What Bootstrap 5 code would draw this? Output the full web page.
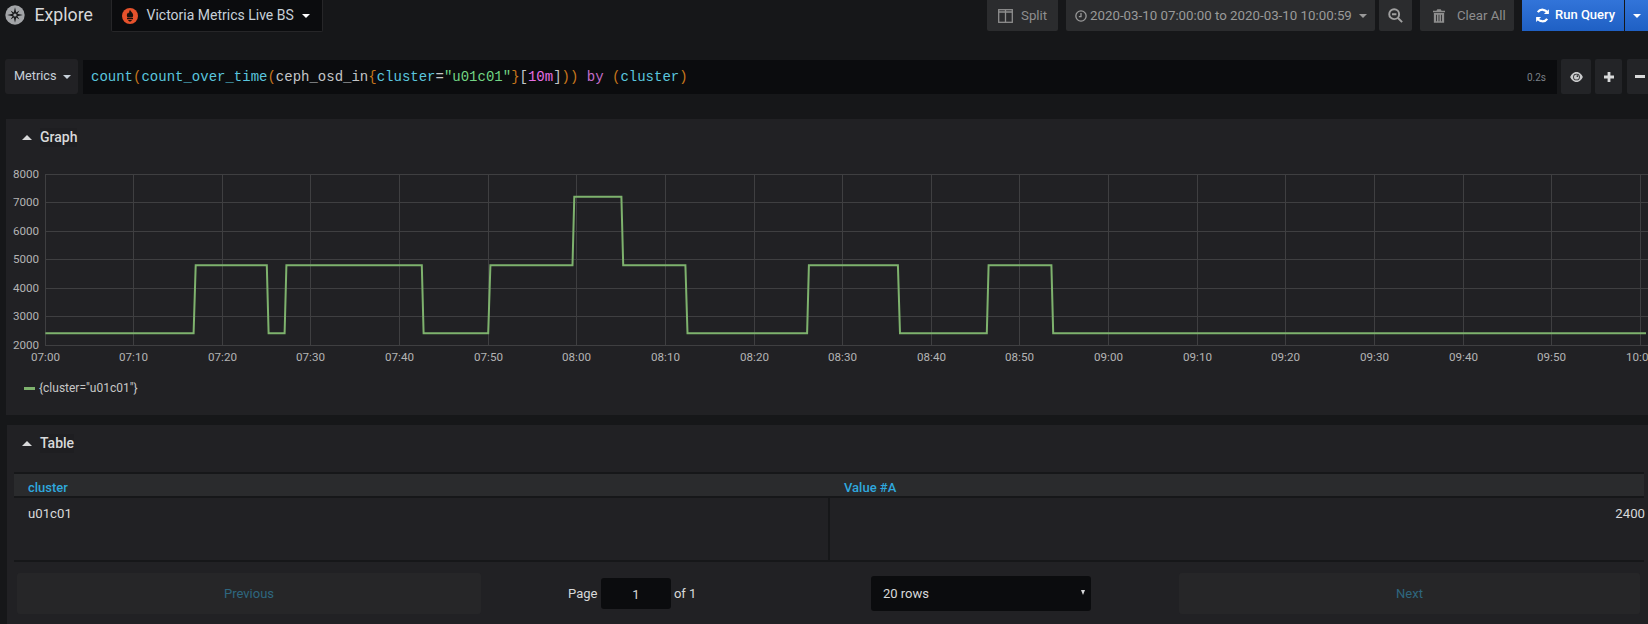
<!DOCTYPE html>
<html lang="en">
<head>
<meta charset="utf-8">
<title>Explore</title>
<link rel="stylesheet" href="https://cdn.jsdelivr.net/npm/bootstrap@5.3.0/dist/css/bootstrap.min.css">
<script src="https://cdn.jsdelivr.net/npm/bootstrap@5.3.0/dist/js/bootstrap.bundle.min.js"></script>
<style>
html,body{height:624px;overflow:hidden}
body{background:#161719;color:#d8d9da;font:13px/1.3 Roboto,sans-serif}
.topbar{height:31px;padding-left:5px}
.gf-logo{margin-bottom:1px;flex:none}
.crumb{font-size:17.700px;margin:0 0 1px 9.500px;color:#d8d9da;width:76px}
.ds-pick{width:212px;height:32px;background:#0b0c0e;border:1px solid #262628;border-top:0;border-radius:0 0 2px 2px;color:#c7d0d9;padding:0 12px 0 10px}
.ds-name{margin-left:9px;font-size:14px}
.tbtn{height:31px;background:#2b2c2e;border-radius:0 0 2px 2px;color:#8e8e8e;flex:none}
.w-split{width:71px;margin-left:auto;margin-right:8px;padding-left:11px;gap:8px;font-size:13.300px}
.w-time{width:309px;margin-right:4px;color:#9a9a9a;font-size:13.300px;padding-left:9px;gap:3px}
.w-zoom{width:33px;margin-right:8px}
.w-clear{width:94px;margin-right:8px;padding-left:13px;gap:12px;font-size:13.200px}
.runbtn{width:102px;height:31px;background:linear-gradient(180deg,#3274d9,#1f60c4);color:#fff;font-weight:500;font-size:13px;padding-left:13px;gap:5px}
.runcaret{width:23px;margin-left:1px;height:31px;background:linear-gradient(180deg,#3274d9,#1f60c4)}
.careta{width:0;height:0;border-left:4px solid transparent;border-right:4px solid transparent;border-top:4.500px solid currentColor}
.carup{width:0;height:0;border-left:5.500px solid transparent;border-right:5.500px solid transparent;border-bottom:5px solid #d8d9da}
.qrow{margin-top:28px;height:35px;padding-left:5px}
.metbtn{width:73px;background:#212124;border-radius:3px;color:#c7d0d9;margin-right:5px;flex:none;padding-left:9px;gap:6px;font-size:12.700px}
.qbox{width:1474px;height:34px;margin-top:1px;background:#0b0c0e;padding:0 11px 0 8px;flex:none;font:14px "Liberation Mono",monospace}
.qbox .ms{font:10px Roboto,sans-serif;color:#7b8087;margin-left:auto}
.c-fn{color:#5ac6de}.c-p{color:#c7761c}.c-w{color:#c4c6c8}.c-s{color:#72d484}.c-k{color:#e66fe4}.c-by{color:#c56cc8}
.sqbtn{height:35px;background:#232427;border-radius:2px;flex:none;color:#d8d9da}
.w-eye{width:30px;margin-left:4px}.w-plus{width:27px;margin-left:4px}.w-minus{width:26px;margin-left:5px;margin-right:-5px}
.pane{background:#212124;margin-left:6px}
.pane-graph{margin-top:25px;height:296px}
.pane-table{margin-top:10px;height:199px;margin-left:7px}
.phead{height:30px;padding:7px 0 0 16px}
.phead.tb{padding:7px 0 0 15px}
.ptitle{margin-left:8px;font-size:14px;font-weight:500;color:#d8d9da;background:#1e1e21}
.chart{display:block;position:absolute;left:0;top:0}
.chartwrap{position:relative;height:296px;margin-top:-30px}
.chart text{font:11.600px Roboto,sans-serif;fill:#b4b4b4}
.lg{position:absolute;left:18px;top:262px;font-size:12px;color:#c7c7c7;display:flex;align-items:center}
.lgbar{width:11px;height:3px;background:#7eb26d;margin-right:4px}
.tbl{margin:17px 0 0 7px;width:1630px;border-top:2px solid #161719;border-bottom:2px solid #161719}
.tr-h{height:24px;background:#2a2b2d;border-bottom:2px solid #161719;color:#2fa8de;font-size:13px;font-weight:500}
.tc-a{width:815px;padding:6px 0 0 14px;flex:none}
.tc-b{padding:6px 0 0 15px}
.tr-b{height:62px;color:#d8d9da;font-size:13.200px}
.tr-b .tc-a{border-right:2px solid #161719;padding-top:7px;width:816px}
.tr-b .tc-v{flex:1;text-align:right;padding-top:7px;margin-right:-1px}
.pager{padding:11px 0 0 10px}
.pgbtn{width:464px;height:41px;background:#262628;border-radius:3px;color:#2e667f;flex:none;padding-top:1px}
.pgmid{width:523px;margin-left:87px;flex:none}
.pgtxt{padding-top:2px}
.pginput{width:70px;height:31px;background:#0b0c0e;border-radius:3px;margin:0 3px 0 3.500px;color:#d8d9da;text-align:center;line-height:33px}
.pgsel{width:220px;height:35px;background:#0b0c0e;border-radius:3px;color:#d8d9da;padding:1px 6px 0 12px;flex:none}
.pgcar{width:0;height:0;border-left:2.500px solid transparent;border-right:2.500px solid transparent;border-top:5px solid #d8d9da;margin-bottom:3px}
.w-next{width:461px;margin-left:88px}
</style>
</head>
<body>
<header class="topbar d-flex align-items-center">
  <svg class="gf-logo" width="20" height="20" viewBox="0 0 20 20"><circle cx="10" cy="10" r="9.700" fill="#a3a5a8"/><path d="M10 2.200L11.500 8.500 17.800 10 11.500 11.500 10 17.800 8.500 11.500 2.200 10 8.500 8.500z" fill="#1b1c1e"/><path d="M10 2.200L11.500 8.500 17.800 10 11.500 11.500 10 17.800 8.500 11.500 2.200 10 8.500 8.500z" fill="#1b1c1e" transform="rotate(45 10 10) translate(10 10) scale(.8) translate(-10 -10)"/><circle cx="10" cy="10" r="1.600" fill="#a3a5a8"/></svg>
  <div class="crumb">Explore</div>
  <div class="ds-pick d-flex align-items-center align-self-start">
    <svg width="16" height="16" viewBox="0 0 16 16"><circle cx="8" cy="8" r="8" fill="#e6522c"/><path d="M8 1.800c.4 1.300 1.200 1.700 1.900 2.600 1 1.200 1.400 2.200 1.200 3.300-.1.700-.4 1.300-.7 1.800H5.600c-.3-.5-.6-1.100-.7-1.800-.2-1.100.4-2.400 1.300-3.300.3.500.5.800.8 1 0-1.300.300-2.500 1-3.600zM5 10.100h6v1.200H5zM6 12h4c-.3.900-1.100 1.500-2 1.500S6.300 12.900 6 12z" fill="#14100e"/></svg>
    <span class="ds-name">Victoria Metrics Live BS</span>
    <span class="careta ms-auto text-white"></span>
  </div>
  <div class="tbtn w-split d-flex align-items-center">
    <svg width="15" height="14" viewBox="0 0 15 14" fill="none" stroke="#8e8e8e" stroke-width="1.300"><rect x=".7" y=".7" width="13.600" height="12.600"/><path d="M7.500 .7v12.600M.7 3h13.600"/></svg><span>Split</span>
  </div>
  <div class="tbtn w-time d-flex align-items-center">
    <svg width="12" height="12" viewBox="0 0 14 14" fill="none" stroke="#9a9a9a" stroke-width="1.500"><circle cx="7" cy="7" r="6"/><path d="M7 3.500V7.800H4.500"/></svg>
    <span>2020-03-10 07:00:00 to 2020-03-10 10:00:59</span>
    <span class="careta ms-1"></span>
  </div>
  <div class="tbtn w-zoom d-flex align-items-center justify-content-center">
    <svg width="15" height="15" viewBox="0 0 17 17" fill="none" stroke="#a0a0a0" stroke-width="2.200"><circle cx="7" cy="7" r="5.600"/><path d="M4.500 7h5M11 11l5 5"/></svg>
  </div>
  <div class="tbtn w-clear d-flex align-items-center">
    <svg width="12" height="14" viewBox="0 0 14 16" fill="#8e8e8e"><path d="M5 0h4l1 2h4v1.500H0V2h4zM1 4.500h12V16H1zM3.500 6.500v7.500h1V6.500zM6.500 6.500v7.500h1V6.500zM9.500 6.500v7.500h1V6.500z" fill-rule="evenodd"/></svg>
    <span>Clear All</span>
  </div>
  <div class="runbtn d-flex align-items-center">
    <svg width="15" height="15" viewBox="0 0 16 16" fill="none" stroke="#fff" stroke-width="2.400"><path d="M13.500 5.500A6 6 0 0 0 3 4.500M2.500 10.500A6 6 0 0 0 13 11.500"/><path d="M14.800 1.200v5.300H9.500zM1.200 14.800V9.500h5.300z" fill="#fff" stroke="none"/></svg>
    <span>Run Query</span>
  </div>
  <div class="runcaret d-flex align-items-center justify-content-center text-white"><span class="careta"></span></div>
</header>

<section class="qrow d-flex">
  <div class="metbtn d-flex align-items-center"><span>Metrics</span><span class="careta"></span></div>
  <div class="qbox d-flex align-items-center">
    <span class="text-nowrap"><span class="c-fn">count</span><span class="c-p">(</span><span class="c-fn">count_over_time</span><span class="c-p">(</span><span class="c-w">ceph_osd_in</span><span class="c-p">{</span><span class="c-fn">cluster</span><span class="c-w">=</span><span class="c-s">"u01c01"</span><span class="c-p">}</span><span class="c-w">[</span><span class="c-k">10m</span><span class="c-w">]</span><span class="c-p">))</span> <span class="c-by">by</span> <span class="c-p">(</span><span class="c-fn">cluster</span><span class="c-p">)</span></span>
    <span class="ms">0.2s</span>
  </div>
  <div class="sqbtn w-eye d-flex align-items-center justify-content-center"><svg width="13" height="10" viewBox="0 0 14 11"><path d="M7 0C3.500 0 1 3 0 5.500 1 8 3.500 11 7 11s6-3 7-5.500C13 3 10.500 0 7 0z" fill="#c9cacb"/><circle cx="7" cy="5.500" r="3.700" fill="#232427"/><circle cx="7" cy="5.500" r="2.800" fill="#c9cacb"/><circle cx="8" cy="4.500" r="1" fill="#232427"/></svg></div>
  <div class="sqbtn w-plus d-flex align-items-center justify-content-center"><svg width="10" height="10" viewBox="0 0 10 10"><path d="M3.600 0h2.800v3.600H10v2.800H6.400V10H3.600V6.400H0V3.600h3.600z" fill="#d8d9da"/></svg></div>
  <div class="sqbtn w-minus d-flex align-items-center justify-content-center"><svg width="10" height="3" viewBox="0 0 10 3"><rect width="10" height="3" fill="#d8d9da"/></svg></div>
</section>

<section class="pane pane-graph position-relative">
  <div class="phead d-flex align-items-center"><span class="carup"></span><span class="ptitle">Graph</span></div>
  <div class="chartwrap">
    <svg class="chart" width="1642" height="296" viewBox="6 119 1642 296">
      <g id="grid" stroke="#3f3f41" stroke-width="1" shape-rendering="crispEdges"></g>
      <g id="lbls"></g>
      <polyline points="45.400,333.300 193.600,333.300 195.700,265.300 266.800,265.300 268.600,333.300 284.600,333.300 286.400,265.300 421.800,265.300 423.600,333.300 488.200,333.300 490.400,265.300 572.500,265.300 574.300,196.700 621.400,196.700 623.200,265.300 685.400,265.300 687.500,333.300 807.100,333.300 808.900,265.300 897.900,265.300 900,333.300 986.800,333.300 988.600,265.300 1051.400,265.300 1053.200,333.300 1646,333.300" fill="none" stroke="#7eb26d" stroke-width="2"/>
    </svg>
    <div class="lg"><span class="lgbar"></span>{cluster="u01c01"}</div>
  </div>
</section>

<section class="pane pane-table">
  <div class="phead tb d-flex align-items-center"><span class="carup"></span><span class="ptitle">Table</span></div>
  <div class="tbl">
    <div class="tr-h d-flex"><div class="tc-a">cluster</div><div class="tc-b">Value #A</div></div>
    <div class="tr-b d-flex"><div class="tc-a">u01c01</div><div class="tc-v">2400</div></div>
  </div>
  <div class="pager d-flex align-items-center">
    <div class="pgbtn d-flex align-items-center justify-content-center">Previous</div>
    <div class="pgmid d-flex align-items-center">
      <span class="pgtxt">Page</span><span class="pginput">1</span><span class="pgtxt">of 1</span>
      <div class="pgsel d-flex align-items-center justify-content-between ms-auto"><span>20 rows</span><span class="pgcar"></span></div>
    </div>
    <div class="pgbtn w-next d-flex align-items-center justify-content-center">Next</div>
  </div>
</section>

<script>
const NS='http://www.w3.org/2000/svg';
const grid=document.getElementById('grid'),lbls=document.getElementById('lbls');
function el(p,n,a,t){const e=document.createElementNS(NS,n);for(const k in a)e.setAttribute(k,a[k]);if(t)e.textContent=t;p.appendChild(e);}
[[8000,174.5],[7000,202.5],[6000,231.5],[5000,259.5],[4000,288.5],[3000,316.5],[2000,345.5]].forEach(([v,y])=>{
  el(grid,'line',{x1:45,x2:1648,y1:y,y2:y});
  el(lbls,'text',{x:39,y:y+3,'text-anchor':'end'},String(v));
});
[['07:00',45.5],['07:10',133.5],['07:20',222.5],['07:30',310.5],['07:40',399.5],['07:50',488.5],['08:00',576.5],['08:10',665.5],['08:20',754.5],['08:30',842.5],['08:40',931.5],['08:50',1019.5],['09:00',1108.5],['09:10',1197.5],['09:20',1285.5],['09:30',1374.5],['09:40',1463.5],['09:50',1551.5],['10:00',1640.5]].forEach(([t,x])=>{
  el(grid,'line',{x1:x,x2:x,y1:174,y2:346});
  el(lbls,'text',{x:x,y:361,'text-anchor':'middle'},t);
});
</script>
</body>
</html>
